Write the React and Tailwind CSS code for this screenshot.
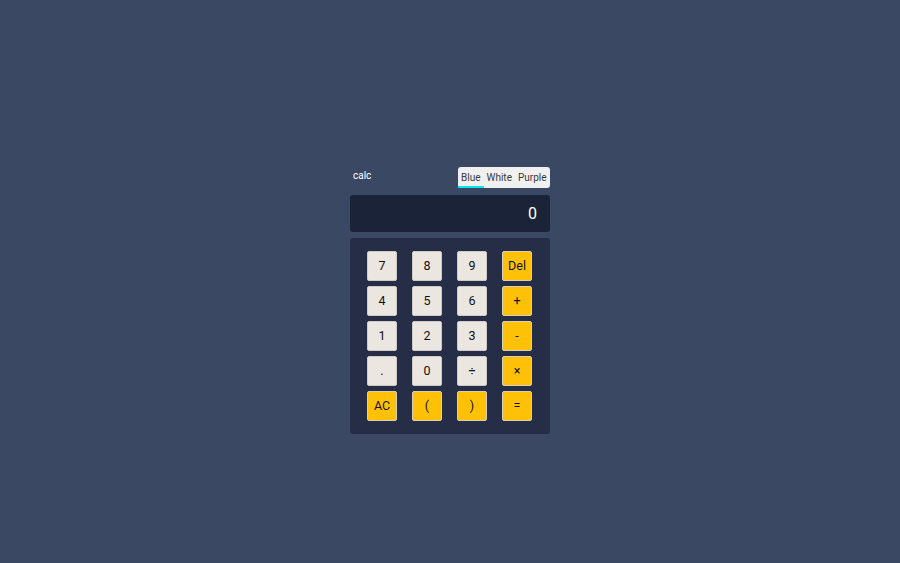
// App.jsx
// Simple calculator with theme tabs

const keys = [
  { label: '7' }, { label: '8' }, { label: '9' }, { label: 'Del', op: true },
  { label: '4' }, { label: '5' }, { label: '6' }, { label: '+', op: true },
  { label: '1' }, { label: '2' }, { label: '3' }, { label: '-', op: true },
  { label: '.' }, { label: '0' }, { label: '÷' }, { label: '×', op: true },
  { label: 'AC', op: true }, { label: '(', op: true }, { label: ')', op: true }, { label: '=', op: true },
]

export default function App() {
  return (
    <div
      className="w-full h-[563px] bg-[#3b4863] flex justify-center pt-[167px]"
      style={{ fontFamily: 'Roboto, "Liberation Sans", sans-serif' }}
    >
      <div className="w-[200px] flex flex-col">
        {/* header */}
        <div className="flex justify-between items-start h-[21px]">
          <span className="text-white text-[10px] ml-[3px] mt-[1px]">calc</span>
          <div className="bg-[#f0f0f0] rounded-[3px] flex h-[21px] text-[10px] text-[#3a3a3a] px-[0.5px]">
            <div className="relative px-[3px] flex items-center">
              Blue
              <span className="absolute left-0 right-0 bottom-0 h-[2px] bg-[#00e5ee]" />
            </div>
            <div className="px-[3px] flex items-center">White</div>
            <div className="px-[3px] flex items-center">Purple</div>
          </div>
        </div>

        {/* display */}
        <div className="mt-[7px] h-[37px] bg-[#1b2338] rounded-[3px] flex items-center justify-end pr-[13px]">
          <span className="text-white text-[16px]">0</span>
        </div>

        {/* keypad */}
        <div className="mt-[6px] bg-[#252d47] rounded-[3px] pt-[13px] pb-[13px] pl-[17px] pr-[18px] grid grid-cols-[repeat(4,30px)] justify-between gap-y-[5px]">
          {keys.map((k) => (
            <button
              key={k.label}
              className={
                k.op
                  ? 'w-[30px] h-[30px] rounded-[2px] border border-[#d9cfb8] bg-[#ffc107] text-[#111] text-[12.5px] flex items-center justify-center'
                  : 'w-[30px] h-[30px] rounded-[2px] border border-[#cfcac4] bg-[#ebe6e0] text-[#111] text-[12.5px] flex items-center justify-center'
              }
            >
              {k.label}
            </button>
          ))}
        </div>
      </div>
    </div>
  )
}
